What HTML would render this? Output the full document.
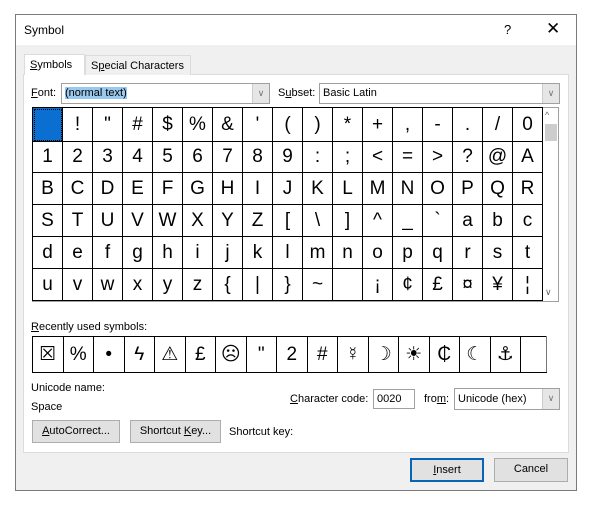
<!DOCTYPE html>
<html><head><style>
*{box-sizing:border-box;margin:0;padding:0}
body{width:602px;height:508px;background:#fff;position:relative;font-family:"Liberation Sans","DejaVu Sans",sans-serif;font-size:11px;color:#000;overflow:hidden}
.dlg{position:absolute;left:15px;top:14px;width:562px;height:477px;border:1px solid #7a7a7a;background:#f0f0f0}
.title{position:absolute;left:0;top:0;width:100%;height:30px;background:#fff}
.abs{position:absolute}
.panel{position:absolute;left:7px;top:59px;width:546px;height:379px;background:#fff;border:1px solid #dcdcdc}
.tab{position:absolute;height:20px;border:1px solid #dcdcdc;border-bottom:none;padding:4px 5px;font-size:11px}
.combo{position:absolute;height:21px;border:1px solid #a0a0a0;background:#fff;padding:3px 3px;font-size:11px}
.arrow{position:absolute;right:0;top:0;width:17px;height:19px;background:#e6e6e6;border-left:1px solid #ccc;color:#777;font-size:9px;text-align:center;line-height:19px}
table{border-collapse:collapse;position:absolute;table-layout:fixed}
td{border:1px solid #000;text-align:center;font-size:19px;padding:0;overflow:hidden;white-space:nowrap}
.btn{position:absolute;height:23px;background:#e1e1e1;border:1px solid #adadad;text-align:center;line-height:21px;font-size:11px}
u{text-decoration:underline}
</style></head><body>
<div class="dlg">
 <div class="title"></div>
 <div class="abs" style="left:8px;top:8px;font-size:12px">Symbol</div>
 <div class="abs" style="left:488px;top:7px;font-size:13px">?</div>
 <div class="abs" style="left:530px;top:4px;font-size:17px;font-weight:300">✕</div>
 <div class="panel"></div>
 <div class="tab" style="left:8px;top:39px;width:61px;height:21px;background:#fff;z-index:2"><u>S</u>ymbols</div>
 <div class="tab" style="left:69px;top:40px;width:106px;background:#f0f0f0">S<u>p</u>ecial Characters</div>
</div>
<div class="abs" style="left:31px;top:87px"><u>F</u>ont:</div>
<div class="combo" style="left:61px;top:83px;width:209px"><span style="background:#99c9ef">(normal text)</span><div class="arrow">∨</div></div>
<div class="abs" style="left:278px;top:87px">S<u>u</u>bset:</div>
<div class="combo" style="left:319px;top:83px;width:241px">Basic Latin<div class="arrow">∨</div></div>
<div class="abs" style="left:32px;top:107px;width:527px;height:195px;border:1px solid #a0a0a0"></div>
<table style="left:32px;top:107px;width:511px">
<colgroup><col span="17" style="width:30px"></colgroup>
<tr style="height:34px"><td style="background:#0a6fd0;outline:1px dotted #000;outline-offset:-2px"></td><td>!</td><td>"</td><td>#</td><td>$</td><td>%</td><td>&amp;</td><td>'</td><td>(</td><td>)</td><td>*</td><td>+</td><td>,</td><td>-</td><td>.</td><td>/</td><td>0</td></tr>
<tr style="height:31px"><td>1</td><td>2</td><td>3</td><td>4</td><td>5</td><td>6</td><td>7</td><td>8</td><td>9</td><td>:</td><td>;</td><td>&lt;</td><td>=</td><td>&gt;</td><td>?</td><td>@</td><td>A</td></tr>
<tr style="height:32px"><td>B</td><td>C</td><td>D</td><td>E</td><td>F</td><td>G</td><td>H</td><td>I</td><td>J</td><td>K</td><td>L</td><td>M</td><td>N</td><td>O</td><td>P</td><td>Q</td><td>R</td></tr>
<tr style="height:32px"><td>S</td><td>T</td><td>U</td><td>V</td><td>W</td><td>X</td><td>Y</td><td>Z</td><td>[</td><td>\</td><td>]</td><td>^</td><td>_</td><td>`</td><td>a</td><td>b</td><td>c</td></tr>
<tr style="height:32px"><td>d</td><td>e</td><td>f</td><td>g</td><td>h</td><td>i</td><td>j</td><td>k</td><td>l</td><td>m</td><td>n</td><td>o</td><td>p</td><td>q</td><td>r</td><td>s</td><td>t</td></tr>
<tr style="height:32px"><td>u</td><td>v</td><td>w</td><td>x</td><td>y</td><td>z</td><td>{</td><td>|</td><td>}</td><td>~</td><td></td><td>¡</td><td>¢</td><td>£</td><td>¤</td><td>¥</td><td>¦</td></tr>
</table>
<div class="abs" style="left:545px;top:110px;font-size:9px;color:#666">^</div>
<div class="abs" style="left:545px;top:124px;width:12px;height:17px;background:#cdcdcd"></div>
<div class="abs" style="left:545px;top:287px;font-size:9px;color:#666">∨</div>
<div class="abs" style="left:31px;top:321px"><u>R</u>ecently used symbols:</div>
<table style="left:32px;top:336px;width:514px;border:1px solid #777">
<colgroup><col span="16" style="width:30.5px"><col style="width:26px"></colgroup>
<tr style="height:36px"><td>☒</td><td>%</td><td>•</td><td>ϟ</td><td>⚠</td><td>£</td><td>☹</td><td>"</td><td>2</td><td>#</td><td>☿</td><td>☽</td><td>☀</td><td>₵</td><td>☾</td><td>⚓</td><td style="border-right:1px solid #777"></td></tr>
</table>
<div class="abs" style="left:31px;top:382px">Unicode name:</div>
<div class="abs" style="left:31px;top:401px">Space</div>
<div class="abs" style="left:290px;top:393px"><u>C</u>haracter code:</div>
<div class="combo" style="left:373px;top:389px;width:42px;height:20px">0020</div>
<div class="abs" style="left:424px;top:393px">fro<u>m</u>:</div>
<div class="combo" style="left:454px;top:388px;width:106px;height:22px;padding-top:4px">Unicode (hex)<div class="arrow" style="height:20px">∨</div></div>
<div class="btn" style="left:32px;top:420px;width:88px"><u>A</u>utoCorrect...</div>
<div class="btn" style="left:130px;top:420px;width:91px">Shortcut <u>K</u>ey...</div>
<div class="abs" style="left:229px;top:426px">Shortcut key:</div>
<div class="btn" style="left:410px;top:458px;width:74px;height:24px;border:2px solid #0a64b4;line-height:20px"><u>I</u>nsert</div>
<div class="btn" style="left:494px;top:458px;width:74px;height:24px">Cancel</div>
</body></html>
